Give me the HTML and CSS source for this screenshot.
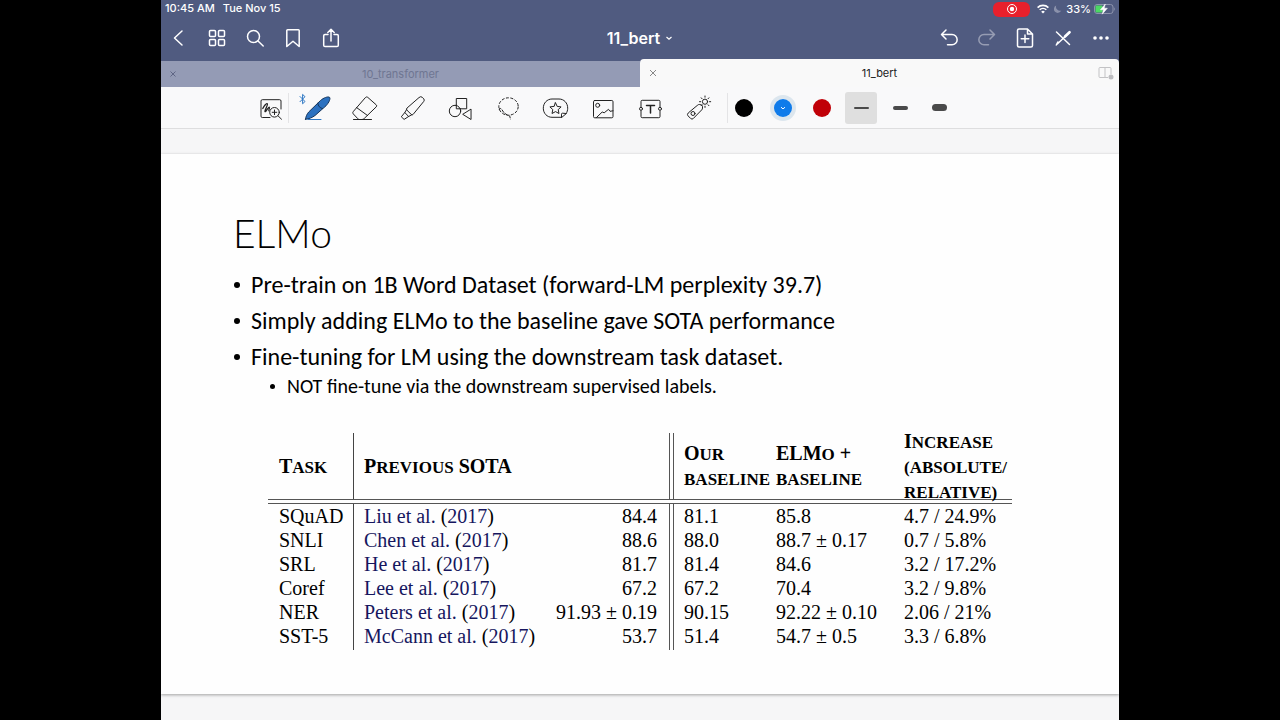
FILE: index.html
```html
<!DOCTYPE html>
<html lang="en">
<head>
<meta charset="UTF-8">
<meta name="viewport" content="width=device-width, initial-scale=1.0">
<title>11_bert</title>
<link rel="stylesheet" href="styles.css">
</head>
<body>
<div class="tablet">
  <header class="header">
    <div class="status-bar">
      <div class="status-left"><span>10:45 AM</span><span>Tue Nov 15</span></div>
      <div class="status-right">
        <span class="record-pill">
          <svg width="12" height="12" viewBox="0 0 12 12"><circle cx="6" cy="6" r="4.5" fill="none" stroke="#fff"/><circle cx="6" cy="6" r="2.2" fill="#fff"/></svg>
        </span>
        <svg class="wifi" width="12" height="10" viewBox="0 0 12 10" fill="none" stroke="#fff" stroke-width="1.6"><path d="M.6 3.6a7.6 7.6 0 0 1 10.800 0M2.700 5.800a4.700 4.700 0 0 1 6.600 0"/><path d="M6 9.600 4.200 7.700a2.600 2.600 0 0 1 3.600 0z" fill="#fff" stroke="none"/></svg>
        <svg class="moon" width="8" height="8" viewBox="0 0 8 8"><path d="M2.200.6a3.800 3.800 0 1 0 5 5A4 4 0 0 1 2.200.6z" fill="#8a91ab"/></svg>
        <span>33%</span>
        <svg class="battery" width="22" height="12" viewBox="0 0 22 12"><rect x=".5" y="1.5" width="18.5" height="9" rx="2.5" fill="none" stroke="#8d94ad"/><rect x="1.5" y="2.5" width="7" height="7" rx="1" fill="#4cd964"/><path d="M20.300 4.500v3.200c1-.4 1-2.800 0-3.200z" fill="#8d94ad"/><path d="M11.300 1 6.400 6.800h3L8.200 11.200l5.200-6h-3.200z" fill="#fff" stroke="#fff" stroke-width=".5"/></svg>
      </div>
    </div>

    <nav class="nav-bar">
      <div class="nav-group">
        <button class="nav-btn" aria-label="Back"><svg viewBox="0 0 24 24"><path d="M15 5 7.500 12l7.500 7"/></svg></button>
        <button class="nav-btn" aria-label="Thumbnails"><svg viewBox="0 0 24 24"><rect x="4.500" y="4.500" width="6" height="6" rx="1"/><rect x="13.500" y="4.500" width="6" height="6" rx="1"/><rect x="4.500" y="13.500" width="6" height="6" rx="1"/><rect x="13.500" y="13.500" width="6" height="6" rx="1"/></svg></button>
        <button class="nav-btn" aria-label="Search"><svg viewBox="0 0 24 24"><circle cx="10.500" cy="10.500" r="6"/><path d="m15 15 5.200 5"/></svg></button>
        <button class="nav-btn" aria-label="Bookmark"><svg viewBox="0 0 24 24"><path d="M5.800 4.500q0-.8.800-.8h10.800q.8 0 .8.800v16L12 15.300l-6.200 5.200z"/></svg></button>
        <button class="nav-btn" aria-label="Share"><svg viewBox="0 0 24 24"><path d="M9 8.500H6q-1.300 0-1.300 1.300v9.400q0 1.300 1.300 1.300h12q1.300 0 1.300-1.300V9.800q0-1.300-1.300-1.300h-3M12 15V3.800M8.800 6.500 12 3.300l3.200 3.200"/></svg></button>
      </div>
      <button class="doc-title">11_bert <svg width="8" height="8" viewBox="0 0 8 8"><path d="m1.500 3 2.500 2.300L6.500 3" fill="none" stroke="#fff" stroke-width="1.2"/></svg></button>
      <div class="nav-group">
        <button class="nav-btn" aria-label="Undo"><svg viewBox="0 0 24 24"><path d="M9 4 4.500 8.500 9 13M5 8.500h10a5 5 0 0 1 0 10.300h-4.500"/></svg></button>
        <button class="nav-btn dim" aria-label="Redo"><svg viewBox="0 0 24 24"><path d="m15 4 4.500 4.500L15 13M19 8.500H9a5 5 0 0 0 0 10.300h4.500"/></svg></button>
        <button class="nav-btn" aria-label="Add page"><svg viewBox="0 0 24 24"><path d="M14.500 3H6q-1.500 0-1.500 1.500v15Q4.500 21 6 21h12q1.500 0 1.500-1.500V8zM14.500 3v5h5M12 9v7.500M8.200 12.800h7.600"/></svg></button>
        <button class="nav-btn" aria-label="Read only"><svg viewBox="0 0 24 24"><path d="m5.500 6 13 12.500M5.300 19l1.500-3M6.300 18 18.700 6.200"/><path d="m14 10.500 4.500-4.300" stroke-width="2.600"/></svg></button>
        <button class="nav-btn" aria-label="More"><svg viewBox="0 0 24 24"><g fill="#fff" stroke="none"><circle cx="6" cy="12" r="1.800"/><circle cx="12" cy="12" r="1.800"/><circle cx="18" cy="12" r="1.800"/></g></svg></button>
      </div>
    </nav>

    <div class="tabs">
      <div class="tab">
        <button class="tab-close" aria-label="Close 10_transformer"><svg viewBox="0 0 8 8"><path d="m1.500 1.500 5 5m0-5-5 5"/></svg></button>
        <span class="tab-name">10_transformer</span>
      </div>
      <div class="tab active">
        <button class="tab-close" aria-label="Close 11_bert"><svg viewBox="0 0 8 8"><path d="m1 1 6 6M7 1 1 7"/></svg></button>
        <span class="tab-name">11_bert</span>
        <button class="tab-split" aria-label="Split view"><svg width="16" height="14" viewBox="0 0 16 14"><path d="M10 11.500H2q-1 0-1-1v-8q0-1 1-1h10q1 0 1 1V8M7 1.500v10" fill="none" stroke="#c3c3c5"/><circle cx="13" cy="11" r="2.500" fill="#bdbdc0"/></svg></button>
      </div>
    </div>
  </header>

  <div class="toolbar">
    <button class="tool" aria-label="Zoom window"><svg viewBox="0 0 28 28"><path d="M14 23.500H6.300q-1.300 0-1.300-1.300V7q0-1.300 1.300-1.300h17.400Q25 5.700 25 7v8"/><circle cx="18.500" cy="18.300" r="4.800"/><path d="m22 21.800 3.500 3.400M16.200 18.300h4.600M18.500 16v4.600"/><path d="M6.800 14.500c1.500-3 3.700-5.500 4.500-4.700 1 1-3 6.800-2.300 7.800.8.800 3.200-4.900 4.300-4.400.9.500-1.200 3.200-.3 3.600" stroke-width="1.300"/></svg></button>
    <div class="divider"></div>
    <div class="tools">
      <button class="tool" aria-label="Pen"><svg viewBox="0 0 28 28"><path d="m-3 2.500 5 5L-.4 9.800V.4L2 2.700l-5 5" stroke="#2f78c4"/><path d="M2.500 25.300c.2-2.500 1.300-5 3.200-7.300L17.500 6.500c3-2.700 7.500-4.300 9-3.200 1.300 1.200-.5 5.200-3.500 8.500L12 21.500c-3 2.200-6 3.500-9.500 3.800z" fill="#2b71c0" stroke="#14355c"/><path d="M14.800 9.200c.4 3 2 4.800 4.800 5.400" stroke="#14355c"/><path d="M5 25.500h13" stroke="#2f78c4"/></svg></button>
      <button class="tool" aria-label="Eraser"><svg viewBox="0 0 28 28"><path d="M14.700 3.300q1-.9 2 0l8.500 7.500q1 1 .1 2L13.200 24.500q-1 1-2.200 1H8.500q-1 0-1.700-.8l-4.600-4.900q-1-1.200 0-2.200zM5.500 13.500l11 8M2.500 25.500h18"/></svg></button>
      <button class="tool" aria-label="Highlighter"><svg viewBox="0 0 28 28"><path d="M21.300 3.300q1.400-1.300 2.800-.1l1.700 1.700q1 1.200-.1 2.600L15 20.500q-.8.800-1.700 0L8.800 16q-.8-.8 0-1.700zM8.500 15.700l-1.700 2.800 3.800 4 3.200-1.800M6.800 18.500l-3.500 4.300 2.800 2.600 4.500-2.900"/></svg></button>
      <button class="tool" aria-label="Shapes"><svg viewBox="0 0 28 28"><circle cx="9" cy="17" r="5.700"/><path d="M10.300 11V4.500h10.400v10.300h-6.500M10.300 11v3.800h4M24.700 15.300l-8 5 8 5z"/></svg></button>
      <button class="tool" aria-label="Lasso"><svg viewBox="0 0 28 28"><ellipse cx="14.500" cy="12.500" rx="9.700" ry="8.700" stroke-linecap="butt" stroke-dasharray="3 1.500"/><path d="M5.500 16c-1.200-2.600 2-2 3.300 1 1.200 2.700 4.500 4 7 5.200l.7 3.300" stroke-linecap="butt" stroke-dasharray="3.500 1"/></svg></button>
      <button class="tool" aria-label="Stickers"><svg viewBox="0 0 28 28"><path d="M20.500 23.300H11c-5 0-8.700-4-8.700-9.100S6 5 11 5h7c5 0 8.700 4 8.700 9.200 0 2-.6 3.800-1.500 5.300zM20.500 23.300v-3.100q0-1 1-1l3.700.3M14.500 8.800l1.700 3.600 3.900.5-2.900 2.700.8 3.900-3.500-1.900-3.500 1.900.8-3.900-2.900-2.700 3.900-.5z"/></svg></button>
      <button class="tool" aria-label="Image"><svg viewBox="0 0 28 28"><rect x="4.500" y="6.500" width="19.500" height="17.300" rx="1.200"/><circle cx="8.700" cy="11.300" r="2"/><path d="m7.500 23.500 5.700-5.500 2 .8 4.300-3.500 1.500 2 3-.5"/></svg></button>
      <button class="tool" aria-label="Text"><svg viewBox="0 0 28 28"><path d="M5 12.800V7.500q0-1.200 1.200-1.200h16.600q1.200 0 1.200 1.200v5.300M5 16.800v5.700q0 1.200 1.200 1.200h16.600q1.200 0 1.200-1.200v-5.700"/><circle cx="5" cy="14.800" r="1.500"/><circle cx="24" cy="14.800" r="1.500"/><path d="M10.500 11.500h8M14.500 11.500v7.500" stroke-width="1.500"/></svg></button>
      <button class="tool" aria-label="Laser pointer"><svg viewBox="0 0 28 28"><path d="M13.500 11.200q1-1 2.200-.7l2 .6q.8.300.8 1.200v1.800q0 1-.8 1.800l-8.400 8.600q-1.300 1.300-2.600 0L4 21.800q-1.200-1.300 0-2.600z"/><circle cx="9" cy="19.500" r="2"/><circle cx="21" cy="7.700" r="2.600"/><path d="M21 2v1.200M21 12.200v1.200M15.500 7.700h1.200M25.500 7.700h1.200M17.200 3.800l.8.900M24.100 10.800l.8.900M24.900 3.800l-.8.900M18 10.800l-.8.900"/></svg></button>
    </div>
    <div class="divider"></div>
    <div class="styles">
      <button class="pick" aria-label="Black"><span class="color black"></span></button>
      <button class="pick" aria-label="Blue"><span class="color blue"><svg width="8" height="8" viewBox="0 0 8 8"><path d="m2 3.200 2 1.700 2-1.700" fill="none" stroke="#fff"/></svg></span></button>
      <button class="pick" aria-label="Red"><span class="color red"></span></button>
      <button class="pick selected" aria-label="Thin stroke"><span class="stroke thin"></span></button>
      <button class="pick" aria-label="Medium stroke"><span class="stroke medium"></span></button>
      <button class="pick" aria-label="Thick stroke"><span class="stroke thick"></span></button>
    </div>
  </div>

  <main class="viewer">
    <article class="slide">
      <h1>ELMo</h1>
      <ul class="points">
        <li>Pre-train on 1B Word Dataset (forward-LM perplexity 39.7)</li>
        <li>Simply adding ELMo to the baseline gave SOTA performance</li>
        <li>Fine-tuning for LM using the downstream task dataset.
          <ul class="sub-points">
            <li>NOT fine-tune via the downstream supervised labels.</li>
          </ul>
        </li>
      </ul>

      <table class="results">
        <colgroup>
          <col class="col-task"><col class="col-cite"><col class="col-score"><col class="col-gap"><col class="col-base"><col class="col-elmo"><col class="col-inc">
        </colgroup>
        <thead>
          <tr>
            <th class="task">T<span class="sc">ask</span></th>
            <th colspan="2">P<span class="sc">revious</span> SOTA</th>
            <td class="gap"></td>
            <th><div class="lines">O<span class="sc">ur</span><br><span class="sc">baseline</span></div></th>
            <th><div class="lines">ELM<span class="sc">o</span> +<br><span class="sc">baseline</span></div></th>
            <th><div class="lines">I<span class="sc">ncrease</span><br><span class="sc">(absolute/</span><br><span class="sc">relative)</span></div></th>
          </tr>
          <tr class="rule"><td colspan="7"></td></tr>
        </thead>
        <tbody>
          <tr><td class="task">SQuAD</td><td><a href="#">Liu et al.</a> (<a href="#">2017</a>)</td><td class="score">84.4</td><td class="gap"></td><td>81.1</td><td>85.8</td><td>4.7 / 24.9%</td></tr>
          <tr><td class="task">SNLI</td><td><a href="#">Chen et al.</a> (<a href="#">2017</a>)</td><td class="score">88.6</td><td class="gap"></td><td>88.0</td><td>88.7 ± 0.17</td><td>0.7 / 5.8%</td></tr>
          <tr><td class="task">SRL</td><td><a href="#">He et al.</a> (<a href="#">2017</a>)</td><td class="score">81.7</td><td class="gap"></td><td>81.4</td><td>84.6</td><td>3.2 / 17.2%</td></tr>
          <tr><td class="task">Coref</td><td><a href="#">Lee et al.</a> (<a href="#">2017</a>)</td><td class="score">67.2</td><td class="gap"></td><td>67.2</td><td>70.4</td><td>3.2 / 9.8%</td></tr>
          <tr><td class="task">NER</td><td><a href="#">Peters et al.</a> (<a href="#">2017</a>)</td><td class="score">91.93 ± 0.19</td><td class="gap"></td><td>90.15</td><td>92.22 ± 0.10</td><td>2.06 / 21%</td></tr>
          <tr><td class="task">SST-5</td><td><a href="#">McCann et al.</a> (<a href="#">2017</a>)</td><td class="score">53.7</td><td class="gap"></td><td>51.4</td><td>54.7 ± 0.5</td><td>3.3 / 6.8%</td></tr>
        </tbody>
      </table>
    </article>
  </main>
</div>
</body>
</html>
```

FILE: styles.css
```css
* {
  box-sizing: border-box;
}

body {
  margin: 0;
  padding: 0 161px;
  background-color: #000;
  font-family: Inter, sans-serif;
}

button {
  display: flex;
  align-items: center;
  justify-content: center;
  padding: 0;
  border: none;
  background: none;
  font: inherit;
  color: inherit;
  cursor: pointer;
}

.tablet {
  display: flex;
  flex-direction: column;
  min-height: 100vh;
  background-color: #f6f6f7;
}

/* Header */
.header {
  background-color: #505b80;
  color: #fff;
}

.status-bar {
  display: flex;
  justify-content: space-between;
  height: 18px;
  padding: 0 3px 0 4px;
  font-size: 11px;
  font-weight: 500;
  line-height: 17px;
}

.status-left {
  display: flex;
  gap: 8px;
}

.status-right {
  display: flex;
  align-items: center;
}

.record-pill {
  display: flex;
  align-items: center;
  justify-content: center;
  width: 37px;
  height: 15px;
  margin-right: 7px;
  border-radius: 6px;
  background-color: #e8202c;
}

.wifi {
  margin-right: 5px;
}

.moon {
  margin-right: 4px;
}

.battery {
  margin-left: 3px;
}

.nav-bar {
  display: flex;
  align-items: center;
  justify-content: space-between;
  height: 41px;
  padding: 0 6px 2px;
}

.nav-group {
  display: flex;
  gap: 14px;
}

.nav-btn,
.nav-btn svg {
  width: 24px;
  height: 24px;
}

.nav-btn svg {
  fill: none;
  stroke: #fff;
  stroke-width: 1.5;
  stroke-linecap: round;
  stroke-linejoin: round;
}

.nav-btn.dim {
  opacity: 0.4;
}

.doc-title {
  gap: 5px;
  font-size: 16px;
  font-weight: 600;
}

/* Tabs */
.tabs {
  display: flex;
  align-items: flex-end;
  height: 28px;
}

.tab {
  display: flex;
  align-items: center;
  width: 50%;
  height: 26px;
  padding: 0 16px 0 8px;
  background-color: #949bb5;
  color: #6f7692;
  font-size: 11px;
}

.tab.active {
  height: 28px;
  padding: 0 5px 0 9px;
  border-radius: 4px 4px 0 0;
  background-color: #f9f9f9;
  color: #222;
}

.tab-close svg {
  display: block;
  width: 8px;
  height: 8px;
  fill: none;
  stroke: #5f6685;
}

.active .tab-close svg {
  stroke: #888;
}

.tab-name {
  flex: 1;
  text-align: center;
}

.active .tab-name {
  padding-left: 4px;
}

/* Toolbar */
.toolbar {
  display: flex;
  align-items: center;
  height: 42px;
  padding-left: 95px;
  border-bottom: 1px solid #dededf;
  background-color: #f9f9fa;
}

.tool,
.tool svg {
  width: 28px;
  height: 28px;
}

.tool svg {
  overflow: visible;
  fill: none;
  stroke: #222;
  stroke-width: 1;
  stroke-linecap: round;
  stroke-linejoin: round;
}

.divider {
  width: 1px;
  height: 30px;
  margin-left: 4px;
  background-color: #e4e4e6;
}

.tools {
  display: flex;
  justify-content: space-between;
  width: 409px;
  margin: 0 11px 0 14px;
}

.styles {
  display: flex;
  gap: 7px;
}

.pick {
  width: 32px;
  height: 32px;
  border-radius: 3px;
}

.pick.selected {
  background-color: #dfdfdf;
}

.color {
  display: flex;
  align-items: center;
  justify-content: center;
  width: 18px;
  height: 18px;
  border-radius: 50%;
}

.black {
  background-color: #000;
}

.blue {
  background-color: #0f7bea;
  box-shadow: 0 0 0 4px #dce6ee;
}

.red {
  background-color: #c00008;
}

.stroke {
  width: 15px;
  border-radius: 4px;
  background-color: #4a4a4a;
}

.thin {
  height: 2px;
}

.medium {
  height: 4px;
}

.thick {
  height: 7px;
}

/* Slide */
.viewer {
  flex: 1;
  padding: 25px 0;
}

.slide {
  padding: 55px 72px 44px;
  background-color: #fefefe;
  box-shadow: 0 1px 3px rgba(0, 0, 0, 0.35);
  color: #000;
  font-family: Carlito, Lato, sans-serif;
}

h1 {
  margin: 0 0 10px;
  font-family: "Lato Light", Lato, Carlito, sans-serif;
  font-size: 39px;
  font-weight: 300;
  line-height: 48px;
}

ul {
  margin: 0;
  padding: 0;
  list-style: none;
}

li {
  display: flex;
  flex-wrap: wrap;
  align-items: center;
}

li::before {
  content: "";
  width: 6px;
  height: 6px;
  margin: 0 11px 0 1px;
  border-radius: 50%;
  background-color: #000;
}

.points {
  font-size: 24px;
  line-height: 36px;
}

.sub-points {
  width: 100%;
  padding-left: 36px;
  font-size: 20px;
  line-height: 22px;
}

.sub-points li::before {
  width: 5px;
  height: 5px;
  margin-right: 12px;
}

/* Results table */
.results {
  width: 744px;
  margin: 36px 0 0 35px;
  border-spacing: 0;
  table-layout: fixed;
  font-family: "Liberation Serif", serif;
  font-size: 20px;
  line-height: 24px;
  white-space: nowrap;
}

.col-task {
  width: 86px;
}

.col-cite {
  width: 190px;
}

.col-score {
  width: 125px;
}

.col-gap {
  width: 5px;
}

.col-base {
  width: 92px;
}

.col-elmo {
  width: 128px;
}

.results th,
.results td {
  padding: 0 0 0 10px;
  text-align: left;
}

.results th {
  height: 66px;
}

.results .task {
  padding-left: 11px;
  border-right: 1px solid #444;
}

.results .score {
  padding: 0 12px 0 0;
  text-align: right;
}

.results .gap {
  padding: 0;
  border: solid #555;
  border-width: 0 1px;
}

.results .rule td {
  height: 5px;
  padding: 0;
  border: solid #555;
  border-width: 1px 0;
}

.results tbody tr:last-child td {
  padding-bottom: 2px;
}

.results a {
  color: #16165e;
  text-decoration: none;
}

/* header lines run slightly past the rules around them */
.lines {
  margin: -5px 0;
  line-height: 25px;
}

.sc {
  font-size: 17px;
  line-height: 17px;
  text-transform: uppercase;
}
```
